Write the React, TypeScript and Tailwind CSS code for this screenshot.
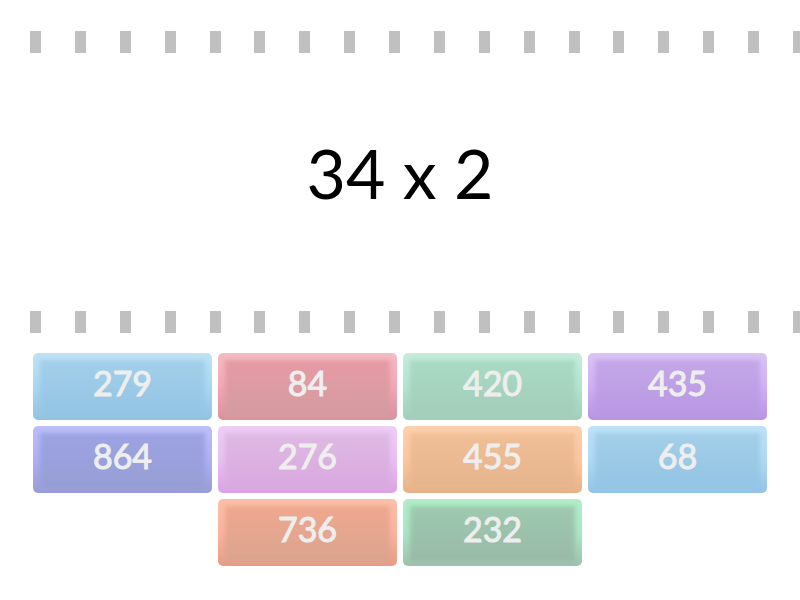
const answers = [
  { value: 279, rim: "from-[#c0e2f4] via-[#a8d8f4] to-[#93c3e2]", face: "from-[#a2d0ea] to-[#93c4e4]" },
  { value: 84, rim: "from-[#f3bcc4] via-[#f3a8b4] to-[#d9929c]", face: "from-[#e69ba4] to-[#d49ba1]" },
  { value: 420, rim: "from-[#c6ecdb] via-[#b0e5cf] to-[#a2cfba]", face: "from-[#a9dac4] to-[#a3cdb9]" },
  { value: 435, rim: "from-[#dac4f4] via-[#cfb0f6] to-[#b994e0]", face: "from-[#c4a7e8] to-[#b998e3]" },
  { value: 864, rim: "from-[#bdbffa] via-[#adb1f4] to-[#989dd6]", face: "from-[#9da3e4] to-[#989ed4]" },
  { value: 276, rim: "from-[#eecdf6] via-[#e9bff2] to-[#dba2e4]", face: "from-[#debae3] to-[#d9a8df]" },
  { value: 455, rim: "from-[#fdd1ae] via-[#fdc7a0] to-[#e8b288]", face: "from-[#f1bf96] to-[#e5b48d]" },
  { value: 68, rim: "from-[#bee1f7] via-[#aedaf5] to-[#94c5e5]", face: "from-[#a3cfe8] to-[#93c4e4]" },
  { value: 736, rim: "from-[#fdbfa9] via-[#fcb3a0] to-[#e89c86]", face: "from-[#f0a88f] to-[#daa48f]" },
  { value: 232, rim: "from-[#b0edc8] via-[#aae7c3] to-[#9dc3ab]", face: "from-[#9ecaaf] to-[#99b9a8]" },
];

function Track() {
  return (
    <div className="overflow-hidden">
      <div className="flex justify-between pl-[30px] -mr-[4px]">
        {Array.from({ length: 18 }, (_, i) => (
          <span key={i} className="h-[22px] w-[11px] shrink-0 bg-[#c0c0c0]" />
        ))}
      </div>
    </div>
  );
}

export default function App() {
  return (
    <main className="min-h-screen bg-white pt-[31px] pb-8 font-['Lato',sans-serif]">
      <Track />
      <div className="flex h-[258px] items-center justify-center pb-[18px]">
        <h1 className="text-[68px] leading-none text-black">34 x 2</h1>
      </div>
      <Track />
      <div className="mt-5 flex flex-wrap justify-center gap-[6px] px-[33px]">
        {answers.map((answer) => (
          <button
            key={answer.value}
            type="button"
            className={`relative flex h-[67px] w-[calc((100%-18px)/4)] items-center justify-center overflow-hidden rounded-[5px] bg-linear-to-b pb-2 ${answer.rim}`}
          >
            {/* soft inner face of the bevel */}
            <span className={`absolute inset-x-[7px] top-[7px] bottom-1 bg-linear-to-b blur-[2px] ${answer.face}`} />
            <span className="relative text-[34px] leading-none text-[#eeeeee] [-webkit-text-stroke:1px_#eeeeee]">
              {answer.value}
            </span>
          </button>
        ))}
      </div>
    </main>
  );
}
